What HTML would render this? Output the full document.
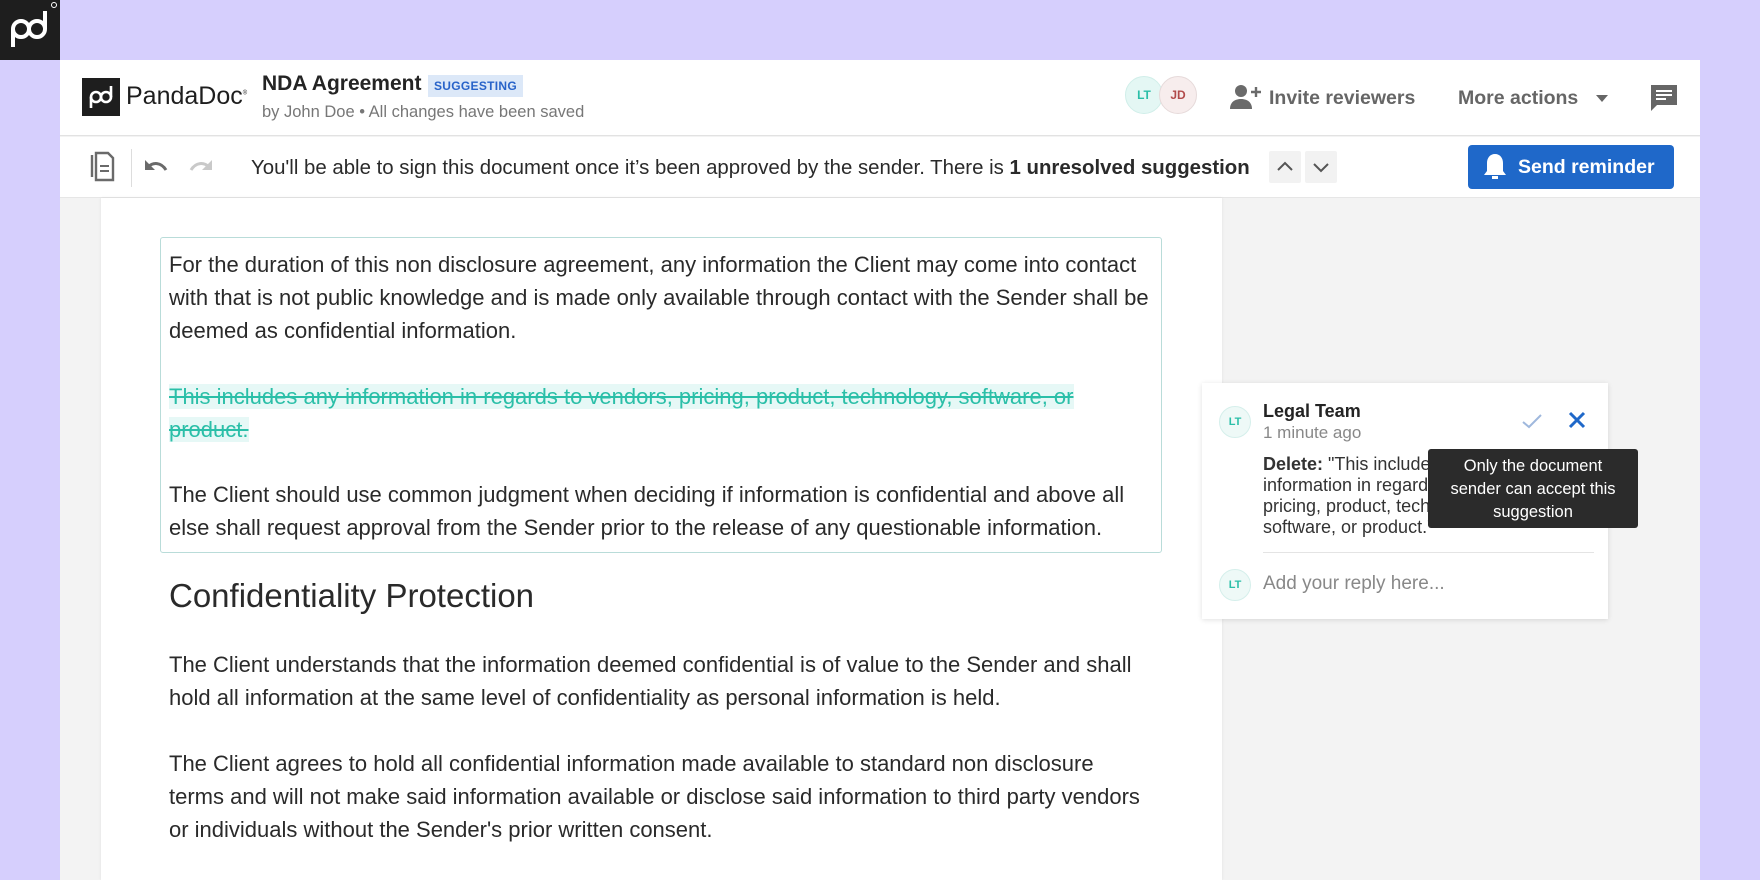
<!DOCTYPE html>
<html><head><meta charset="utf-8"><style>
*{box-sizing:border-box;margin:0;padding:0}
body{width:1760px;height:880px;background:#d6cffd;position:relative;overflow:hidden;font-family:"Liberation Sans",sans-serif;color:#242424}
.abs{position:absolute}
.corner{left:0;top:0;width:60px;height:60px;background:#1e1e1e}
.app{left:60px;top:60px;width:1640px;height:820px;background:#f3f3f3}
.hdr{left:60px;top:60px;width:1640px;height:76px;background:#fff;border-bottom:1px solid #e2e2e2}
.tb{left:60px;top:137px;width:1640px;height:61px;background:#fff;border-bottom:1px solid #e6e6e6}
.page{left:101px;top:198px;width:1121px;height:682px;background:#fff;box-shadow:0 0 3px rgba(0,0,0,.08)}
.doc{font-size:22px;line-height:33px;color:#2a2a2a;white-space:nowrap}
.sug{left:160px;top:237px;width:1002px;height:316px;border:1px solid #b9dcd9;border-radius:3px}
del{color:#2bbfa8;background:#e6f8f6;text-decoration:line-through}
.av{width:32px;height:32px;border-radius:50%;font-size:12px;font-weight:bold;display:flex;align-items:center;justify-content:center}
.card{left:1202px;top:383px;width:406px;height:236px;background:#fff;box-shadow:0 1px 5px rgba(0,0,0,.12)}
.tip{left:1428px;top:449px;width:210px;height:79px;background:#2b2b2b;border-radius:3px;color:#fff;font-size:16.5px;line-height:23px;text-align:center;padding-top:6px}
</style></head><body>
<div class="abs corner"><svg width="60" height="60" viewBox="0 0 60 60"><circle cx="21" cy="29" r="8" fill="none" stroke="#fff" stroke-width="4"/><circle cx="37" cy="29" r="8" fill="none" stroke="#fff" stroke-width="4"/><path d="M13 29v18M45 29V11" stroke="#fff" stroke-width="4"/><circle cx="54" cy="5" r="2.5" fill="none" stroke="#fff" stroke-width="1"/></svg></div>
<div class="abs app"></div>
<div class="abs hdr">
 <div class="abs" style="left:22px;top:18px;width:38px;height:38px;background:#1e1e1e"><svg width="38" height="38" viewBox="0 0 38 38"><circle cx="14" cy="19" r="5" fill="none" stroke="#fff" stroke-width="2.6"/><circle cx="24" cy="19" r="5" fill="none" stroke="#fff" stroke-width="2.6"/><path d="M9 19v11M29 19V8" stroke="#fff" stroke-width="2.6"/></svg></div>
 <div class="abs" style="left:66px;top:22px;font-size:25px;color:#1e1e1e">PandaDoc<sup style="font-size:6px">®</sup></div>
 <div class="abs" style="left:202px;top:12px;font-size:21px;font-weight:bold;color:#242424">NDA Agreement</div>
 <div class="abs" style="left:368px;top:15px;background:#dce8f8;color:#2863c9;font-size:12px;font-weight:bold;padding:4px 6px;letter-spacing:.3px">SUGGESTING</div>
 <div class="abs" style="left:202px;top:43px;font-size:16.5px;color:#777">by John Doe • All changes have been saved</div>
 <div class="abs av" style="left:1065px;top:16px;width:38px;height:38px;background:#e4f7f4;color:#2bbfa8;border:1px solid #d0eee9">LT</div>
 <div class="abs av" style="left:1099px;top:16px;width:38px;height:38px;background:#f7eded;color:#b14b4b;border:1px solid #e6dada">JD</div>
 <svg class="abs" style="left:1170px;top:24px" width="34" height="26" viewBox="0 0 34 26"><circle cx="11" cy="7" r="6" fill="#6a6a6a"/><path d="M0 25c0-7 5-10 11-10s11 3 11 10z" fill="#6a6a6a"/><path d="M26 3v10M21 8h10" stroke="#6a6a6a" stroke-width="2.4"/></svg>
 <div class="abs" style="left:1209px;top:27px;font-size:19.5px;font-weight:bold;color:#666">Invite reviewers</div>
 <div class="abs" style="left:1398px;top:27px;font-size:19.5px;font-weight:bold;color:#666">More actions</div>
 <div class="abs" style="left:1536px;top:35px;border-left:6px solid transparent;border-right:6px solid transparent;border-top:7px solid #666"></div>
 <svg class="abs" style="left:1589px;top:23px" width="30" height="30" viewBox="0 0 30 30"><path d="M2 2h26v20H8l-6 6z" fill="#666"/><path d="M7 8h16M7 12h16M7 16h10" stroke="#fff" stroke-width="2"/></svg>
</div>
<div class="abs tb">
 <svg class="abs" style="left:28px;top:14px" width="28" height="32" viewBox="0 0 28 32"><path d="M4 4v22M8 2h12l5 5v22H8z" fill="none" stroke="#6a6a6a" stroke-width="2.4"/><path d="M12 15h9M12 20h9" stroke="#6a6a6a" stroke-width="2"/></svg>
 <div class="abs" style="left:71px;top:12px;width:1px;height:38px;background:#ddd"></div>
 <svg class="abs" style="left:82px;top:20px" width="28" height="20" viewBox="0 0 28 20"><path d="M6 10c5-5 13-5 18 3" fill="none" stroke="#6a6a6a" stroke-width="3"/><path d="M3 3v10h10z" fill="#6a6a6a"/></svg>
 <svg class="abs" style="left:127px;top:20px" width="28" height="20" viewBox="0 0 28 20"><path d="M22 10c-5-5-13-5-18 3" fill="none" stroke="#c9c9c9" stroke-width="3"/><path d="M25 3v10H15z" fill="#c9c9c9"/></svg>
 <div class="abs" style="left:191px;top:20px;font-size:20.4px;color:#2a2a2a;white-space:nowrap">You'll be able to sign this document once it’s been approved by the sender. There is <b>1 unresolved suggestion</b></div>
 <div class="abs" style="left:1209px;top:14px;width:32px;height:32px;background:#f2f2f2;border-radius:2px"><svg width="32" height="32"><path d="M9 19l7-7 7 7" fill="none" stroke="#555" stroke-width="2"/></svg></div>
 <div class="abs" style="left:1245px;top:14px;width:32px;height:32px;background:#f2f2f2;border-radius:2px"><svg width="32" height="32"><path d="M9 13l7 7 7-7" fill="none" stroke="#555" stroke-width="2"/></svg></div>
 <div class="abs" style="left:1408px;top:8px;width:206px;height:44px;background:#1f68c9;border-radius:4px;color:#fff;font-size:19.5px;font-weight:bold;line-height:44px;padding-left:50px">Send reminder</div>
 <svg class="abs" style="left:1423px;top:15px" width="24" height="30" viewBox="0 0 24 30"><path d="M12 2c-5 0-8 4-8 9v8l-3 4h22l-3-4v-8c0-5-3-9-8-9z" fill="#fff"/><rect x="9" y="24" width="6" height="3" fill="#fff"/></svg>
</div>
<div class="abs page"></div>
<div class="abs sug"></div>
<div class="abs doc" style="left:169px;top:248px">For the duration of this non disclosure agreement, any information the Client may come into contact<br>with that is not public knowledge and is made only available through contact with the Sender shall be<br>deemed as confidential information.</div>
<div class="abs doc" style="left:169px;top:380px"><del>This includes any information in regards to vendors, pricing, product, technology, software, or </del><br><del>product.</del></div>
<div class="abs doc" style="left:169px;top:478px">The Client should use common judgment when deciding if information is confidential and above all<br>else shall request approval from the Sender prior to the release of any questionable information.</div>
<div class="abs" style="left:169px;top:577px;font-size:33px;color:#2a2a2a">Confidentiality Protection</div>
<div class="abs doc" style="left:169px;top:648px">The Client understands that the information deemed confidential is of value to the Sender and shall<br>hold all information at the same level of confidentiality as personal information is held.</div>
<div class="abs doc" style="left:169px;top:747px">The Client agrees to hold all confidential information made available to standard non disclosure<br>terms and will not make said information available or disclose said information to third party vendors<br>or individuals without the Sender's prior written consent.</div>
<div class="abs card">
 <div class="abs av" style="left:17px;top:23px;background:#eef9f7;color:#2bbfa8;border:1px solid #d5efeb;font-size:11px">LT</div>
 <div class="abs" style="left:61px;top:18px;font-size:18px;font-weight:bold">Legal Team</div>
 <div class="abs" style="left:61px;top:40px;font-size:17px;color:#888">1 minute ago</div>
 <svg class="abs" style="left:318px;top:28px" width="24" height="20"><path d="M3 11l6 5L21 4" fill="none" stroke="#9fb8dd" stroke-width="2"/></svg>
 <svg class="abs" style="left:365px;top:27px" width="20" height="20"><path d="M3 3l14 14M17 3L3 17" stroke="#1f68c9" stroke-width="3"/></svg>
 <div class="abs" style="left:61px;top:71px;font-size:18px;line-height:21px;color:#333;white-space:nowrap"><b>Delete:</b> "This includes any<br>information in regards to vendors,<br>pricing, product, technology,<br>software, or product."</div>
 <div class="abs" style="left:61px;top:169px;width:331px;height:1px;background:#e4e4e4"></div>
 <div class="abs av" style="left:17px;top:186px;background:#eef9f7;color:#2bbfa8;border:1px solid #d5efeb;font-size:11px">LT</div>
 <div class="abs" style="left:61px;top:190px;font-size:19px;color:#888">Add your reply here...</div>
</div>
<div class="abs tip">Only the document<br>sender can accept this<br>suggestion</div>
</body></html>
